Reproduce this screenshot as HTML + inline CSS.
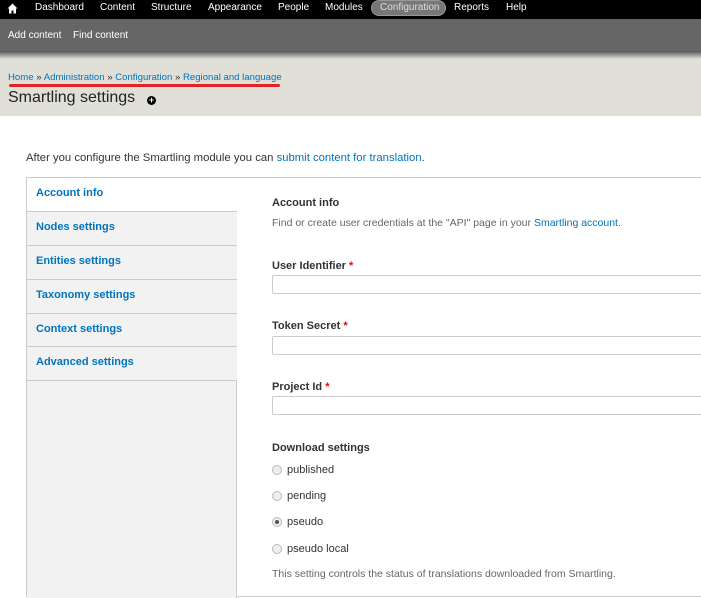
<!DOCTYPE html>
<html><head><style>
*{margin:0;padding:0;box-sizing:border-box}
body{width:701px;height:593px;overflow:hidden;font-family:"Liberation Sans",sans-serif;background:#fff;position:relative;font-size:11px}
.a{position:absolute}
#tb{left:0;top:0;width:701px;height:19px;background:#000;color:#fff;font-size:10px}
#tb span{position:absolute;top:2px}
#sc{left:0;top:19px;width:701px;height:32px;background:#666;color:#fff;font-size:10px}
#sh{left:0;top:51px;width:701px;height:8px;background:linear-gradient(#555,#e0e0d8)}
#hd{left:0;top:59px;width:701px;height:57px;background:#e0e0d8}
a,.l{color:#0074bd;text-decoration:none}
.tab{position:absolute;left:27px;width:210px;height:34px;border-top:1px solid #ccc;background:#f2f2f2;color:#0074bd;font-weight:bold;font-size:11px;padding:9px 0 0 9px}
.lab{position:absolute;left:272px;font-weight:bold;color:#333;font-size:11px}
.inp{position:absolute;left:272px;width:440px;height:19px;border:1px solid #ccc;border-radius:2px;background:#fff}
.rad{position:absolute;left:272px;width:10px;height:10px;border-radius:50%;border:1px solid #bbb;background:#eee}
.rt{position:absolute;left:287px;color:#333;font-size:11px}
.req{color:#e00}
</style></head><body>
<div id="tb" class="a">
<svg style="position:absolute;left:7px;top:3px" width="11" height="11" viewBox="0 0 11 11"><path d="M5.5 0.5 L0.5 5.5 H2 V10.5 H4.5 V7.5 H6.5 V10.5 H9 V5.5 H10.5 Z" fill="#fff"/></svg>
<span style="left:35px">Dashboard</span><span style="left:100px">Content</span><span style="left:151px">Structure</span><span style="left:208px">Appearance</span><span style="left:278px">People</span><span style="left:325px">Modules</span>
<div style="position:absolute;left:371px;top:0;width:75px;height:16px;border-radius:8px;background:#777;border:1px solid #999"></div>
<span style="left:380px;color:#ddd">Configuration</span><span style="left:454px">Reports</span><span style="left:506px">Help</span>
</div>
<div id="sc" class="a"><span style="position:absolute;left:8px;top:11px">Add content</span><span style="position:absolute;left:73px;top:11px">Find content</span></div>
<div id="sh" class="a"></div>
<div id="hd" class="a"></div>
<div class="a" style="left:8px;top:72px;font-size:9.6px;color:#0074bd">Home <span style="color:#333">»</span> Administration <span style="color:#333">»</span> Configuration <span style="color:#333">»</span> Regional and language</div>
<div class="a" style="left:9px;top:84px;width:271px;height:3px;background:#e0242a;border-radius:2px"></div>
<div class="a" style="left:8px;top:89px;font-size:16px;color:#222">Smartling settings</div>
<div class="a" style="left:147px;top:96px;width:9px;height:9px;border-radius:50%;background:#000;color:#fff;font-size:9px;line-height:9px;text-align:center;font-weight:bold">+</div>
<div class="a" style="left:26px;top:152px;color:#333;font-size:11.3px">After you configure the Smartling module you can <span class="l">submit content for translation</span>.</div>
<div class="a" style="left:26px;top:177px;width:700px;height:420px;border:1px solid #ccc"></div>
<div class="a" style="left:27px;top:178px;width:210px;height:420px;background:#f2f2f2;border-right:1px solid #ccc"></div>
<div class="tab" style="top:178px;background:#fff;border-top:none;height:33px;width:211px;padding-top:9px">Account info</div>
<div class="tab" style="top:211px">Nodes settings</div>
<div class="tab" style="top:245px">Entities settings</div>
<div class="tab" style="top:279px">Taxonomy settings</div>
<div class="tab" style="top:313px">Context settings</div>
<div class="tab" style="top:346px">Advanced settings</div>
<div class="a" style="left:27px;top:380px;width:210px;border-top:1px solid #ccc"></div>
<div class="lab" style="top:197px">Account info</div>
<div class="a" style="left:272px;top:217px;color:#666;font-size:10.5px">Find or create user credentials at the "API" page in your <span class="l">Smartling account</span>.</div>
<div class="lab" style="top:260px">User Identifier <span class="req">*</span></div>
<div class="inp" style="top:275px"></div>
<div class="lab" style="top:320px">Token Secret <span class="req">*</span></div>
<div class="inp" style="top:336px"></div>
<div class="lab" style="top:381px">Project Id <span class="req">*</span></div>
<div class="inp" style="top:396px"></div>
<div class="lab" style="top:442px">Download settings</div>
<div class="rad" style="top:465px"></div><div class="rt" style="top:464px">published</div>
<div class="rad" style="top:491px"></div><div class="rt" style="top:490px">pending</div>
<div class="rad" style="top:517px"></div><div class="a" style="left:275px;top:520px;width:4px;height:4px;border-radius:50%;background:#555"></div><div class="rt" style="top:516px">pseudo</div>
<div class="rad" style="top:544px"></div><div class="rt" style="top:543px">pseudo local</div>
<div class="a" style="left:272px;top:568px;color:#666;font-size:10.5px">This setting controls the status of translations downloaded from Smartling.</div>
</body></html>
